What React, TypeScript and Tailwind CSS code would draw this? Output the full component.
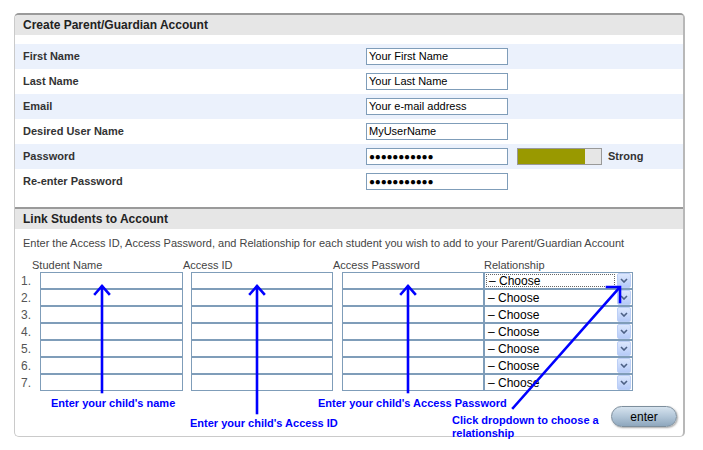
import React from 'react';

const accountRows = [
  { label: 'First Name', value: 'Your First Name' },
  { label: 'Last Name', value: 'Your Last Name' },
  { label: 'Email', value: 'Your e-mail address' },
  { label: 'Desired User Name', value: 'MyUserName' },
  { label: 'Password', value: '', secret: true, meter: true },
  { label: 'Re-enter Password', value: '', secret: true },
];

function TextBox({ children, className = '' }: { children?: React.ReactNode; className?: string }) {
  return (
    <div
      className={`flex h-[17px] items-center border border-[#7f9db9] bg-white pl-[2px] text-[11px] leading-none text-black ${className}`}
    >
      {children}
    </div>
  );
}

function Select({ focused }: { focused?: boolean }) {
  return (
    <div className="flex h-[17px] w-[149px] items-center border border-[#7f9db9] bg-white px-px">
      <div
        className={`flex h-[13px] flex-1 items-center pl-[2px] text-[12px] leading-none text-black ${
          focused ? 'border border-dotted border-[#666]' : ''
        }`}
      >
        – Choose
      </div>
      <div className="ml-[2px] flex h-[15px] w-[14px] items-center justify-center rounded-[2px] border border-[#bccff6] bg-linear-to-b from-[#dce7fd] to-[#b6cbf8]">
        <svg width="8" height="5" viewBox="0 0 8 5">
          <path d="M1 1 L4 4 L7 1" stroke="#4d6185" strokeWidth="1.6" fill="none" />
        </svg>
      </div>
    </div>
  );
}

export default function App() {
  const dots = '●●●●●●●●●●●';

  return (
    <div className="relative h-[450px] w-[703px] overflow-hidden bg-white pl-[14px] pt-[13px] font-['Liberation_Sans',Arial,sans-serif] text-[#333]">
      <div className="h-[424px] w-[671px] overflow-hidden rounded-[5px] border border-t-2 border-r-2 border-[#cacaca] border-t-[#9a9a9a] border-r-[#b8b8b8]">
        {/* Account section */}
        <div className="flex h-[20px] items-center bg-[#e6e6e6] pl-[8px] text-[12px] font-bold text-[#222]">
          Create Parent/Guardian Account
        </div>
        <div className="h-[9px]" />
        {accountRows.map((row, i) => (
          <div
            key={row.label}
            className={`flex h-[25px] items-center ${i % 2 === 0 ? 'bg-[#ebf1fc]' : 'bg-white'}`}
          >
            <div className="w-[351px] pl-[8px] text-[11px] font-bold text-[#333]">{row.label}</div>
            <TextBox className="w-[142px]">
              {row.secret ? <span className="text-[10px] tracking-[-0.2px]">{dots}</span> : row.value}
            </TextBox>
            {row.meter && (
              <>
                <div className="ml-[9px] flex h-[17px] w-[85px] border border-[#999] bg-[#e6e6e6]">
                  <div className="h-full w-[67px] bg-[#999900]" />
                </div>
                <div className="ml-[6px] text-[11px] font-bold text-[#333]">Strong</div>
              </>
            )}
          </div>
        ))}
        <div className="h-[13px]" />

        {/* Link students section */}
        <div className="flex h-[22px] items-center border-t-2 border-[#9a9a9a] bg-[#e6e6e6] pl-[8px] text-[12px] font-bold text-[#222]">
          Link Students to Account
        </div>
        <div className="mt-[7px] pl-[8px] text-[11px] leading-[14px] text-[#444]">
          Enter the Access ID, Access Password, and Relationship for each student you wish to add to your
          Parent/Guardian Account
        </div>

        <div className="mt-[9px] flex pl-[17px] text-[11px] leading-[13px] text-[#444]">
          <div className="w-[151px]">Student Name</div>
          <div className="w-[150px]">Access ID</div>
          <div className="w-[151px]">Access Password</div>
          <div>Relationship</div>
        </div>

        {[1, 2, 3, 4, 5, 6, 7].map((n) => (
          <div key={n} className="flex items-center">
            <div className="w-[25px] pl-[6px] text-[12px] leading-none text-[#555]">{n}.</div>
            <TextBox className="w-[143px]" />
            <TextBox className="ml-[8px] w-[142px]" />
            <TextBox className="ml-[9px] w-[142px]" />
            <Select focused={n === 1} />
          </div>
        ))}

        <div className="mt-[15px] flex justify-end pr-[6px]">
          <button className="flex h-[21px] w-[66px] items-center justify-center rounded-full border border-[#7d8e9c] bg-linear-to-b from-[#d6e3ee] via-[#b2c6d8] to-[#8ea7bd] text-[12px] leading-none text-black shadow-[1px_1px_2px_rgba(0,0,0,0.35)]">
            enter
          </button>
        </div>
      </div>

      {/* Annotations */}
      <svg
        className="pointer-events-none absolute left-0 top-0"
        width="703"
        height="450"
        viewBox="0 0 703 450"
      >
        <g stroke="#0000ff" strokeWidth="2.6" fill="none" strokeLinecap="square">
          <path d="M102 392 L102 287" />
          <path d="M95 294 L102 286 L109 294" />
          <path d="M257 413 L257 287" />
          <path d="M250 294 L257 286 L264 294" />
          <path d="M408 392 L408 287" />
          <path d="M401 294 L408 286 L415 294" />
          <path d="M513 408 L619 288" />
          <path d="M607 287 L620 287 L620 302" />
        </g>
      </svg>
      <div className="pointer-events-none absolute left-[51px] top-[397px] text-[11px] font-bold leading-[13px] text-[#0000ff]">
        Enter your child's name
      </div>
      <div className="pointer-events-none absolute left-[190px] top-[417px] text-[11px] font-bold leading-[13px] text-[#0000ff]">
        Enter your child's Access ID
      </div>
      <div className="pointer-events-none absolute left-[318px] top-[397px] text-[11px] font-bold leading-[13px] text-[#0000ff]">
        Enter your child's Access Password
      </div>
      <div className="pointer-events-none absolute left-[452px] top-[414px] text-[11px] font-bold leading-[13px] text-[#0000ff]">
        Click dropdown to choose a
        <br />
        relationship
      </div>
    </div>
  );
}
